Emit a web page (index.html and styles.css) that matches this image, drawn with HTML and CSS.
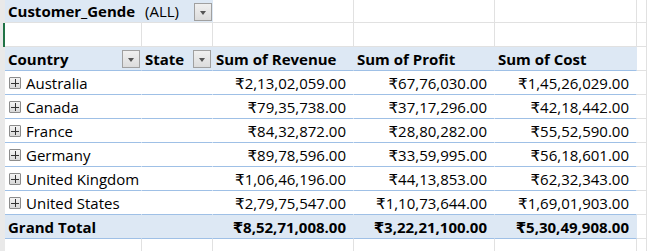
FILE: index.html
```html
<!DOCTYPE html>
<html lang="en">
<head>
    <meta charset="UTF-8">
    <meta name="viewport" content="width=device-width, initial-scale=1.0">
    <title>Pivot - Revenue by Country</title>
    <link rel="stylesheet" href="styles.css">
</head>

<body>
    <div class="sheet">
        <!-- report filter -->
        <div class="row row-top">
            <div class="cell edge pv-head"></div>
            <div class="cell pv-head bold">Customer_Gende</div>
            <div class="cell pv-head has-drop">(ALL)<span class="drop"></span></div>
            <div class="cell"></div>
            <div class="cell"></div>
            <div class="cell"></div>
            <div class="cell"></div>
        </div>

        <div class="row">
            <div class="cell edge selected"></div>
            <div class="cell"></div>
            <div class="cell"></div>
            <div class="cell"></div>
            <div class="cell"></div>
            <div class="cell"></div>
            <div class="cell"></div>
        </div>

        <!-- pivot header -->
        <div class="row pv-row head">
            <div class="cell edge pv-head"></div>
            <div class="cell pv-head bold has-drop">Country<span class="drop"></span></div>
            <div class="cell pv-head bold has-drop">State<span class="drop"></span></div>
            <div class="cell pv-head bold">Sum of Revenue</div>
            <div class="cell pv-head bold">Sum of Profit</div>
            <div class="cell pv-head bold">Sum of Cost</div>
            <div class="cell"></div>
        </div>

        <div class="row pv-row">
            <div class="cell edge"></div>
            <div class="cell pv"><span class="plus"></span>Australia</div>
            <div class="cell pv"></div>
            <div class="cell pv num">₹2,13,02,059.00</div>
            <div class="cell pv num">₹67,76,030.00</div>
            <div class="cell pv num">₹1,45,26,029.00</div>
            <div class="cell"></div>
        </div>
        <div class="row pv-row">
            <div class="cell edge"></div>
            <div class="cell pv"><span class="plus"></span>Canada</div>
            <div class="cell pv"></div>
            <div class="cell pv num">₹79,35,738.00</div>
            <div class="cell pv num">₹37,17,296.00</div>
            <div class="cell pv num">₹42,18,442.00</div>
            <div class="cell"></div>
        </div>
        <div class="row pv-row">
            <div class="cell edge"></div>
            <div class="cell pv"><span class="plus"></span>France</div>
            <div class="cell pv"></div>
            <div class="cell pv num">₹84,32,872.00</div>
            <div class="cell pv num">₹28,80,282.00</div>
            <div class="cell pv num">₹55,52,590.00</div>
            <div class="cell"></div>
        </div>
        <div class="row pv-row">
            <div class="cell edge"></div>
            <div class="cell pv"><span class="plus"></span>Germany</div>
            <div class="cell pv"></div>
            <div class="cell pv num">₹89,78,596.00</div>
            <div class="cell pv num">₹33,59,995.00</div>
            <div class="cell pv num">₹56,18,601.00</div>
            <div class="cell"></div>
        </div>
        <div class="row pv-row">
            <div class="cell edge"></div>
            <div class="cell pv"><span class="plus"></span>United Kingdom</div>
            <div class="cell pv"></div>
            <div class="cell pv num">₹1,06,46,196.00</div>
            <div class="cell pv num">₹44,13,853.00</div>
            <div class="cell pv num">₹62,32,343.00</div>
            <div class="cell"></div>
        </div>
        <div class="row pv-row">
            <div class="cell edge"></div>
            <div class="cell pv"><span class="plus"></span>United States</div>
            <div class="cell pv"></div>
            <div class="cell pv num">₹2,79,75,547.00</div>
            <div class="cell pv num">₹1,10,73,644.00</div>
            <div class="cell pv num">₹1,69,01,903.00</div>
            <div class="cell"></div>
        </div>

        <!-- grand total -->
        <div class="row pv-row total">
            <div class="cell edge pv-head"></div>
            <div class="cell pv-head bold">Grand Total</div>
            <div class="cell pv-head"></div>
            <div class="cell pv-head bold num">₹8,52,71,008.00</div>
            <div class="cell pv-head bold num">₹3,22,21,100.00</div>
            <div class="cell pv-head bold num">₹5,30,49,908.00</div>
            <div class="cell"></div>
        </div>

        <div class="row">
            <div class="cell edge"></div>
            <div class="cell"></div>
            <div class="cell"></div>
            <div class="cell"></div>
            <div class="cell"></div>
            <div class="cell"></div>
            <div class="cell"></div>
        </div>
    </div>
</body>

</html>
```

FILE: styles.css
```css
body {
    margin: 0;
    background: #fff;
    overflow: hidden;
}

.sheet {
    font-family: "Open Sans", "DejaVu Sans", sans-serif;
    font-size: 15px;
    color: #000;
}

.row {
    display: grid;
    grid-template-columns: 5px 137px 71px 141px 141px 142px 1fr;
    height: 24px;
}

.row-top {
    height: 23px;
}

.cell {
    box-sizing: border-box;
    display: flex;
    align-items: flex-end;
    padding: 0 3px 1px;
    border-right: 1px solid #e1e1e1;
    border-bottom: 1px solid #e1e1e1;
    white-space: nowrap;
    overflow: hidden;
    position: relative;
}

.cell.edge {
    padding: 0;
    border: 0;
    background: #e9e9e9;
}

.cell.selected {
    background: linear-gradient(to right, #e9e9e9 3px, #217346 3px);
}

/* pivot table */
.pv-head {
    background: #dde8f4;
    border-right-color: #dde8f4;
}

.pv {
    background: #fff;
    border-right-color: #fff;
}

.pv-row .cell.pv,
.pv-row .cell.pv-head {
    border-bottom-color: #9fc0e6;
}

.bold {
    font-weight: bold;
}

.num {
    justify-content: flex-end;
    padding-right: 7px;
}

.plus {
    box-sizing: border-box;
    width: 12px;
    height: 12px;
    margin: 0 5px 4px 1px;
    border: 1px solid #8c8c8c;
    border-radius: 1px;
    background:
        linear-gradient(#333, #333) center / 8px 1px no-repeat,
        linear-gradient(#333, #333) center / 1px 8px no-repeat,
        linear-gradient(#f4f4f4, #d8d8d8);
    flex: none;
}

/* filter dropdown buttons */
.drop {
    position: absolute;
    right: 1px;
    bottom: 2px;
    box-sizing: border-box;
    width: 18px;
    height: 18px;
    border: 1px solid #a0a0a0;
    background: linear-gradient(#f0f0f0, #dcdcdc);
}

.drop::after {
    content: "";
    position: absolute;
    left: 5px;
    top: 7px;
    border-left: 3.5px solid transparent;
    border-right: 3.5px solid transparent;
    border-top: 4px solid #555;
}

.row-top .drop {
    right: 0;
    bottom: 1px;
}
```
